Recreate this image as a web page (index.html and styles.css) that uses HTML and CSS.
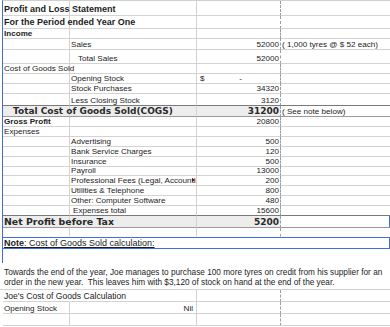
FILE: index.html
```html
<!DOCTYPE html>
<html>
<head>
<meta charset="utf-8">
<link rel="stylesheet" href="styles.css">
</head>
<body>
<div class="top">
  <div class="row h15"><div class="c a title">Profit and Loss Statement</div><div class="c b"></div><div class="c cc"></div><div class="c d"></div></div>
  <div class="row h13"><div class="c a title">For the Period ended Year One</div><div class="c b"></div><div class="c cc"></div><div class="c d"></div></div>
  <div class="row h9"><div class="c a bold">Income</div><div class="c b"></div><div class="c cc"></div><div class="c d"></div></div>
  <div class="row h12"><div class="c a"></div><div class="c b">Sales</div><div class="c cc">52000</div><div class="c d">( 1,000 tyres @ $ 52 each)</div></div>
  <div class="row h14"><div class="c a"></div><div class="c b ind8">Total Sales</div><div class="c cc">52000</div><div class="c d"></div></div>
  <div class="row h10"><div class="c a">Cost of Goods Sold</div><div class="c b"></div><div class="c cc"></div><div class="c d"></div></div>
  <div class="row h9"><div class="c a"></div><div class="c b">Opening Stock</div><div class="c cc acct"><span class="cur">$</span><span class="dash">-</span></div><div class="c d"></div></div>
  <div class="row h11"><div class="c a"></div><div class="c b">Stock Purchases</div><div class="c cc">34320</div><div class="c d"></div></div>
  <div class="row h12 darkline"><div class="c a"></div><div class="c b">Less Closing Stock</div><div class="c cc">3120</div><div class="c d"></div></div>
  <div class="row h11 shaded"><div class="c a heavy ind10">Total Cost of Goods Sold(COGS)</div><div class="c b"></div><div class="c cc heavy">31200</div><div class="c d white">( See note below)</div></div>
  <div class="row h10"><div class="c a bold">Gross Profit</div><div class="c b"></div><div class="c cc">20800</div><div class="c d"></div></div>
  <div class="row h10"><div class="c a">Expenses</div><div class="c b"></div><div class="c cc"></div><div class="c d"></div></div>
  <div class="row h10"><div class="c a"></div><div class="c b">Advertising</div><div class="c cc">500</div><div class="c d"></div></div>
  <div class="row h10"><div class="c a"></div><div class="c b">Bank Service Charges</div><div class="c cc">120</div><div class="c d"></div></div>
  <div class="row h9"><div class="c a"></div><div class="c b">Insurance</div><div class="c cc">500</div><div class="c d"></div></div>
  <div class="row h10"><div class="c a"></div><div class="c b">Payroll</div><div class="c cc">13000</div><div class="c d"></div></div>
  <div class="row h10"><div class="c a"></div><div class="c b clip">Professional Fees (Legal, Accounting)<span class="more"></span></div><div class="c cc">200</div><div class="c d"></div></div>
  <div class="row h10"><div class="c a"></div><div class="c b">Utilities &amp; Telephone</div><div class="c cc">800</div><div class="c d"></div></div>
  <div class="row h10"><div class="c a"></div><div class="c b">Other: Computer Software</div><div class="c cc">480</div><div class="c d"></div></div>
  <div class="row h10 darkline"><div class="c a"></div><div class="c b ind3">Expenses total</div><div class="c cc">15600</div><div class="c d"></div></div>
  <div class="row h12 shaded"><div class="c a heavy big">Net Profit before Tax</div><div class="c b"></div><div class="c cc heavy">5200</div><div class="c d white blue-cell"></div></div>
  <div class="row h9"><div class="c a nob"></div><div class="c b nob"></div><div class="c cc nob"></div><div class="c d nob"></div></div>
  <div class="note"><span class="note-text"><b>Note</b>: Cost of Goods Sold calculation:</span></div>
  <div class="gap"></div>
</div>
<div class="bottom">
  <div class="para">Towards the end of the year, Joe manages to purchase 100 more tyres on credit from his supplier for an<br>order in the new year.&nbsp; This leaves him with $3,120 of stock on hand at the end of the year.</div>
  <div class="row h12"><div class="c a nor joe">Joe's Cost of Goods Calculation</div><div class="c b"></div><div class="c cc"></div><div class="c d"></div></div>
  <div class="row h12"><div class="c a">Opening Stock</div><div class="c b right">Nil</div><div class="c cc"></div><div class="c d"></div></div>
  <div class="row h12"><div class="c a"></div><div class="c b"></div><div class="c cc"></div><div class="c d"></div></div>
</div>
</body>
</html>
```
FILE: styles.css
```css
html, body {
  margin: 0;
  padding: 0;
  background: #ffffff;
}
body {
  width: 390px;
  height: 327px;
  overflow: hidden;
  color: #1c1c1c;
  font-family: "Liberation Sans", Arial, sans-serif;
  font-size: 8.1px;
}
.top {
  margin-left: 2px;
  border-left: 1px solid #3f6fdc;
  border-top: 1px solid #cfcfcf;
}
.row {
  display: grid;
  grid-template-columns: 67px 127px 84px 109px;
}
.bottom .row {
  margin-left: 3px;
}
.h9 { height: 9px; }
.h10 { height: 10px; }
.h11 { height: 11px; }
.h12 { height: 12px; }
.h13 { height: 13px; }
.h14 { height: 14px; }
.h15 { height: 15px; }
.c {
  box-sizing: border-box;
  border-right: 1px solid #d3d3d3;
  border-bottom: 1px solid #d3d3d3;
  display: flex;
  align-items: flex-end;
  white-space: nowrap;
  line-height: 9px;
  padding-left: 1px;
  min-width: 0;
  position: relative;
}
.cc {
  border-right: 1px dashed #9c9c9c;
  justify-content: flex-end;
  padding-right: 1px;
}
.d {
  border-right: none;
  padding-left: 1px;
}
.title {
  font-weight: bold;
  font-size: 9px;
  line-height: 11px;
}
.bold {
  font-weight: bold;
}
.heavy {
  font-family: "DejaVu Sans", sans-serif;
  font-weight: bold;
  font-size: 9px;
  line-height: 10px;
  color: #2a2a2a;
}
.heavy.big {
  font-size: 9.4px;
}
.ind8 { padding-left: 8px; }
.ind3 { padding-left: 3px; }
.ind10 { padding-left: 10px; }
.acct {
  justify-content: flex-start;
}
.acct .cur {
  padding-left: 2px;
}
.acct .dash {
  margin-left: auto;
  padding-right: 37px;
}
.darkline .c {
  border-bottom-color: #7a7a7a;
}
.shaded {
  background: #ededed;
}
.shaded .c {
  border-bottom-color: #9a9a9a;
}
.white {
  background: #ffffff;
}
.blue-cell {
  border-bottom: 1px solid #3f6fdc;
  border-right: 1px solid #3f6fdc;
}
.clip {
  overflow: hidden;
  padding-right: 4px;
}
.more {
  position: absolute;
  right: 1px;
  top: 2px;
  width: 0;
  height: 0;
  border-top: 2.5px solid transparent;
  border-bottom: 2.5px solid transparent;
  border-left: 3px solid #7a0c0c;
}
.nob {
  border-bottom-color: transparent;
}
.note {
  box-sizing: border-box;
  height: 12px;
  border-top: 1px solid #3f6fdc;
  border-bottom: 1px solid #3f6fdc;
  border-right: 1px solid #3f6fdc;
  display: flex;
  align-items: flex-end;
  padding-left: 1px;
  font-size: 9px;
  line-height: 10px;
}
.note-text {
  text-decoration: underline;
}
.gap {
  height: 14px;
}
.para {
  box-sizing: border-box;
  height: 27px;
  padding-left: 4px;
  padding-bottom: 1px;
  border-bottom: 1px solid #d3d3d3;
  display: flex;
  align-items: flex-end;
  white-space: nowrap;
  font-size: 8.25px;
  line-height: 10px;
}
.nor {
  border-right-color: transparent;
}
.joe {
  font-size: 8.6px;
}
.right {
  justify-content: flex-end;
  padding-right: 3px;
}
```
